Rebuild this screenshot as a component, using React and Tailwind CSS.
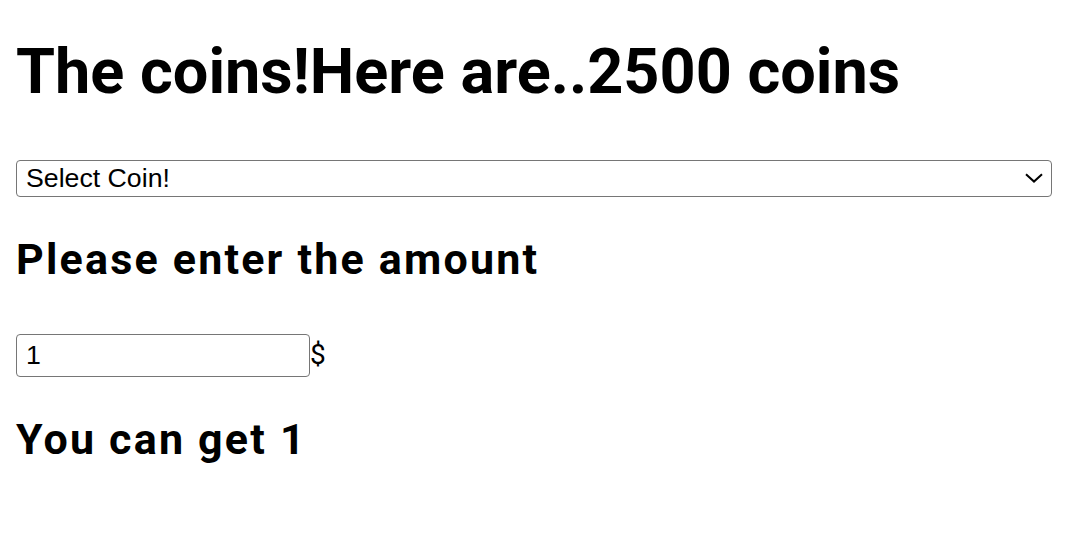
import React, { useState } from "react";

export default function App() {
  const [amount, setAmount] = useState("1");

  return (
    <div className="min-h-[534px] bg-white px-[16px] pt-[40px] text-black font-['Roboto','Noto_Sans_CJK_KR',sans-serif]">
      <h1 className="text-[63px] font-bold leading-none whitespace-nowrap">
        The coins!Here are..2500 coins
      </h1>

      <div className="relative mt-[57px] w-[1036px]">
        <select className="block h-[37px] w-full appearance-none rounded-[4px] border border-[#767676] bg-white pl-[9px] text-[26.7px] leading-none font-['Liberation_Sans',Arial,sans-serif]">
          <option>Select Coin!</option>
        </select>
        <svg
          className="pointer-events-none absolute right-[9px] top-[13px]"
          width="18"
          height="10"
          viewBox="0 0 18 10"
          fill="none"
        >
          <path d="M1 1.2L9 8.6L17 1.2" stroke="black" strokeWidth="2" />
        </svg>
      </div>

      <h3 className="mt-[41px] text-[43px] font-bold leading-none tracking-[2.2px]">
        Please enter the amount
      </h3>

      <div className="mt-[53px] leading-none">
        <input
          value={amount}
          onChange={(e) => setAmount(e.target.value)}
          className="h-[43px] w-[294px] rounded-[4px] border border-[#767676] pl-[9px] align-baseline text-[26.7px] font-['Liberation_Sans',Arial,sans-serif] outline-none"
        />
        <span className="text-[28px]">$</span>
      </div>

      <h3 className="mt-[41px] text-[43px] font-bold leading-none tracking-[2.2px]">
        You can get {amount}
      </h3>
    </div>
  );
}
